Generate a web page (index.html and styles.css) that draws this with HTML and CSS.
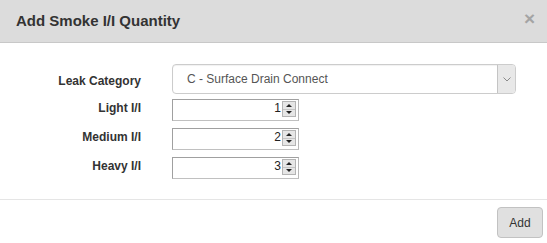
FILE: index.html
```html
<!DOCTYPE html>
<html lang="en">
<head>
    <meta charset="UTF-8">
    <title>Add Smoke I/I Quantity</title>
    <link rel="stylesheet" href="styles.css">
</head>
<body>
<div class="modal">
    <div class="modal-header">
        <h4 class="modal-title">Add Smoke I/I Quantity</h4>
        <span class="close">&times;</span>
    </div>
    <div class="modal-body">
        <div class="form-row">
            <label class="control-label select-label">Leak Category</label>
            <div class="select">
                <span class="select-text">C - Surface Drain Connect</span>
                <span class="select-arrow">
                    <svg width="8" height="5" viewBox="0 0 8 5"><path d="M0.5 0.5 L4 4 L7.5 0.5" fill="none" stroke="#8a8a8a" stroke-width="1"/></svg>
                </span>
            </div>
        </div>
        <div class="form-row">
            <label class="control-label">Light I/I</label>
            <div class="number"><span class="value">1</span><span class="spin"><i class="up"></i><i class="down"></i></span></div>
        </div>
        <div class="form-row">
            <label class="control-label">Medium I/I</label>
            <div class="number"><span class="value">2</span><span class="spin"><i class="up"></i><i class="down"></i></span></div>
        </div>
        <div class="form-row">
            <label class="control-label">Heavy I/I</label>
            <div class="number"><span class="value">3</span><span class="spin"><i class="up"></i><i class="down"></i></span></div>
        </div>
    </div>
    <div class="modal-footer">
        <button class="btn">Add</button>
    </div>
</div>
</body>
</html>
```

FILE: styles.css
```css
body {
    margin: 0;
    background: #fff;
    font-family: "Liberation Sans", Arial, sans-serif;
    font-size: 12px;
    color: #333;
}

.modal {
    width: 547px;
    height: 243px;
    overflow: hidden;
}

.modal-header {
    height: 40px;
    padding: 0 12px 2px 16px;
    background-color: #dcdcdc;
    border-bottom: 1px solid #c8c8c8;
    display: flex;
    align-items: center;
    justify-content: space-between;
}

.modal-title {
    margin: 0;
    font-size: 15px;
    font-weight: bold;
    color: #333;
}

.close {
    font-size: 19px;
    font-weight: bold;
    color: #a4a4a4;
    line-height: 1;
    margin-top: -3px;
}

.modal-body {
    padding: 21px 0 20px 0;
}

.form-row {
    display: flex;
    align-items: flex-start;
    margin-bottom: 7px;
}

.form-row:first-child {
    margin-bottom: 5px;
}

.form-row:last-child {
    margin-bottom: 0;
}

.control-label {
    width: 141px;
    margin-right: 31px;
    text-align: right;
    font-weight: bold;
    line-height: 14px;
    padding-top: 2px;
    color: #333;
}

.control-label.select-label {
    padding-top: 10px;
}

.select {
    box-sizing: border-box;
    width: 344px;
    height: 30px;
    border: 1px solid #ccc;
    border-radius: 4px;
    box-shadow: inset 0 1px 1px rgba(0, 0, 0, .06);
    display: flex;
    align-items: center;
    justify-content: space-between;
}

.select-text {
    padding-left: 14px;
    color: #555;
    line-height: 14px;
}

.select-arrow {
    box-sizing: border-box;
    width: 18px;
    height: 28px;
    background: #e8e8e8;
    border-left: 1px solid #c4c4c4;
    border-radius: 0 3px 3px 0;
    display: flex;
    align-items: center;
    justify-content: center;
}

.number {
    box-sizing: border-box;
    width: 127px;
    height: 22px;
    border: 1px solid #a0a0a0;
    border-bottom-color: #c0c0c0;
    border-right-color: #b8b8b8;
    display: flex;
    justify-content: flex-end;
    align-items: flex-start;
    padding: 1px 2px 0 0;
}

.value {
    line-height: 12px;
    margin-top: 1px;
    margin-right: 1px;
    color: #222;
}

.spin {
    box-sizing: border-box;
    width: 14px;
    height: 16px;
    border: 1px solid #b4b4b4;
    background: #e6e6e6;
    display: flex;
    flex-direction: column;
}

.spin i {
    flex: 1;
    display: flex;
    align-items: center;
    justify-content: center;
}

.spin i.up {
    border-bottom: 1px solid #c4c4c4;
}

.spin i.up::after {
    content: "";
    border-left: 3px solid transparent;
    border-right: 3px solid transparent;
    border-bottom: 3px solid #222;
}

.spin i.down::after {
    content: "";
    border-left: 3px solid transparent;
    border-right: 3px solid transparent;
    border-top: 3px solid #222;
}

.modal-footer {
    border-top: 1px solid #e5e5e5;
    padding: 7px 4px 0 0;
    display: flex;
    justify-content: flex-end;
}

.btn {
    box-sizing: border-box;
    width: 46px;
    height: 31px;
    font-family: "Liberation Sans", Arial, sans-serif;
    font-size: 12px;
    color: #333;
    background: #e0e0e0;
    border: 1px solid #c2c2c2;
    border-radius: 4px;
    padding: 0;
}
```
